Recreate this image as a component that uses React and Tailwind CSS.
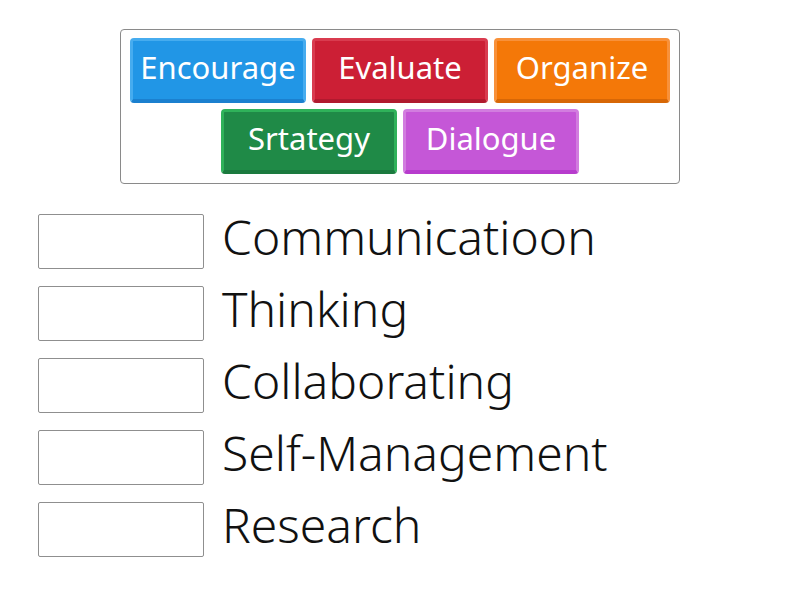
const tiles = [
  [
    { label: "Encourage", cls: "bg-[#2196e6] border-[#46acef] border-b-[#1b80cf]" },
    { label: "Evaluate", cls: "bg-[#cc1f35] border-[#d93b4f] border-b-[#b01a2e]" },
    { label: "Organize", cls: "bg-[#f47808] border-[#f8913a] border-b-[#d76706]" },
  ],
  [
    { label: "Srtategy", cls: "bg-[#1f8a47] border-[#2fb25a] border-b-[#1b7a3e]" },
    { label: "Dialogue", cls: "bg-[#c557d7] border-[#d27ddf] border-b-[#b73ccd]" },
  ],
];

const items = [
  "Communicatioon",
  "Thinking",
  "Collaborating",
  "Self-Management",
  "Research",
];

function Tile({ tile }) {
  return (
    <div
      className={`w-[176px] h-[65px] rounded-[4px] border-[3px] border-b-[4px] flex items-center justify-center ${tile.cls}`}
    >
      <span className="text-white text-[31px] leading-none pb-[5px]">
        {tile.label}
      </span>
    </div>
  );
}

export default function App() {
  return (
    <div
      className="w-[800px] h-[600px] bg-white [font-variant-ligatures:none]"
      style={{ fontFamily: "'Noto Sans', Lato, sans-serif" }}
    >
      <div className="pt-[29px] flex justify-center">
        <div className="w-[560px] h-[155px] border border-[#8a8a8a] rounded-[4px] pt-[8px] flex flex-col items-center gap-[6px]">
          {tiles.map((row, i) => (
            <div key={i} className="flex gap-[6px]">
              {row.map((t) => (
                <Tile key={t.label} tile={t} />
              ))}
            </div>
          ))}
        </div>
      </div>
      <div className="pl-[38px] pt-[30px] flex flex-col gap-[17px]">
        {items.map((label) => (
          <div key={label} className="flex items-center gap-[18px] h-[55px]">
            <div className="w-[166px] h-[55px] border border-[#8f8f8f] rounded-[2px] bg-white" />
            <span className="text-[48px] leading-none text-[#111] font-light pb-[10px]">
              {label}
            </span>
          </div>
        ))}
      </div>
    </div>
  );
}
